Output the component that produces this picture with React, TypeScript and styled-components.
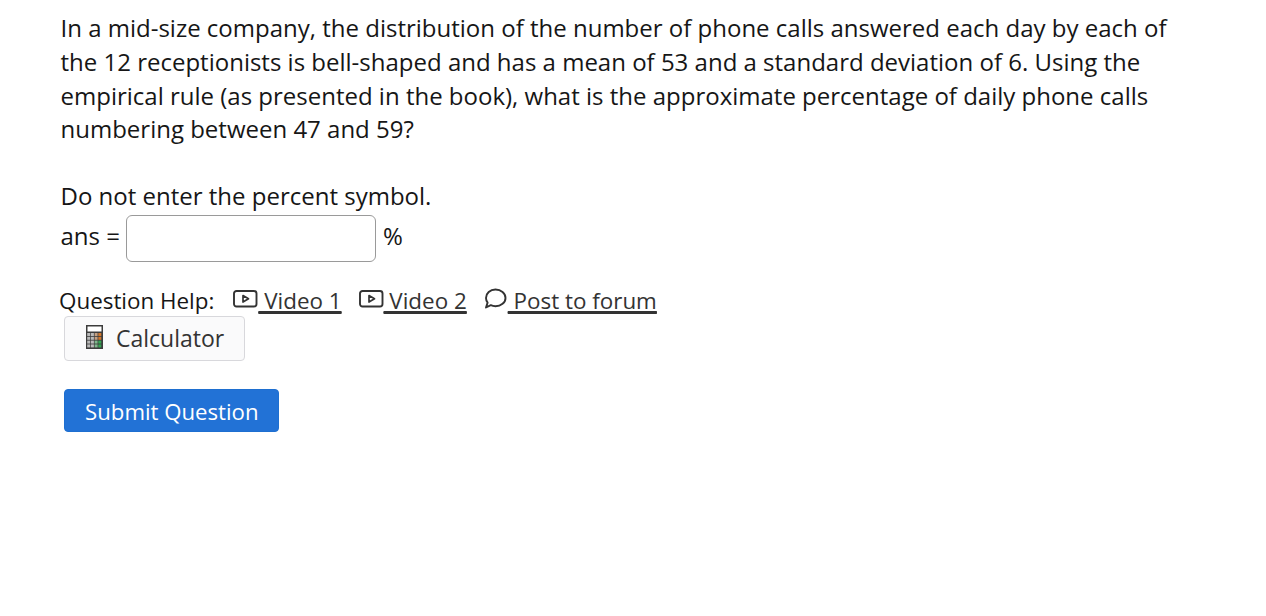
import styled, { createGlobalStyle } from 'styled-components'

const GlobalStyle = createGlobalStyle`
    html, body {
        margin: 0;
        padding: 0;
        background: #fff;
    }
    body {
        font-family: "Open Sans", "Noto Sans", sans-serif;
        color: #161616;
    }
`

const Page = styled.main`
    width: 1266px;
    height: 616px;
    overflow: hidden;
    padding: 11px 0 0 60.5px;
    box-sizing: border-box;
`

const Question = styled.p`
    width: 1125px;
    margin: 0;
    font-size: 24px;
    line-height: 33.8px;
`

const Instruction = styled.p`
    margin: 32.8px 0 0;
    font-size: 24px;
    line-height: 33.9px;
`

const AnswerRow = styled.div`
    display: flex;
    align-items: center;
    height: 47px;
    margin-top: 2px;
    font-size: 24px;
`

const AnswerText = styled.span`
    margin-bottom: 6px;
`

const AnswerInput = styled.input`
    width: 250px;
    height: 47px;
    margin: 0 7px 0 6px;
    padding: 0 8px;
    box-sizing: border-box;
    border: 1px solid #9a9a9a;
    border-radius: 6px;
    background: #fff;
`

const HelpRow = styled.div`
    display: flex;
    align-items: center;
    height: 29px;
    margin: 24px 0 1px -1.5px;
    font-size: 22.4px;
`

const HelpLabel = styled.span`
    margin-right: 19px;
`

const HelpLink = styled.a`
    display: flex;
    align-items: center;
    margin-right: 17px;
    color: #333;
`

const LinkText = styled.span`
    white-space: pre;
    text-decoration: underline;
    text-decoration-thickness: 1.5px;
    text-underline-offset: 3px;
`

const LinkIcon = styled.svg`
    flex: none;
    display: block;
    margin-bottom: 3px;
`

const CalculatorButton = styled.button`
    display: flex;
    align-items: center;
    gap: 13px;
    width: 181px;
    height: 45px;
    margin: 0 0 0 3.5px;
    padding: 0 0 1px 21px;
    box-sizing: border-box;
    border: 1px solid #d8d8dc;
    border-radius: 4px;
    background: #fafafb;
    color: #333;
    font: inherit;
    font-size: 23px;
`

const CalculatorGlyph = styled.svg`
    flex: none;
    display: block;
    margin-bottom: 1px;
`

const SubmitButton = styled.button`
    display: block;
    width: 215px;
    height: 43px;
    margin: 28px 0 0 3.8px;
    padding: 2px 0 0;
    border: 1px solid #1e6fd0;
    border-radius: 4px;
    background: #2272d6;
    color: #fff;
    font: inherit;
    font-size: 22.2px;
    font-weight: 500;
`

function VideoIcon() {
    return (
        <LinkIcon width="25" height="18" viewBox="0 0 25 18" fill="none">
            <rect x="1" y="1" width="22.5" height="15.5" rx="2.5" stroke="#333" strokeWidth="1.9" />
            <path d="M10 5.5 L15.5 8.75 L10 12 Z" stroke="#333" strokeWidth="1.7" strokeLinejoin="round" />
        </LinkIcon>
    )
}

function CommentIcon() {
    return (
        <LinkIcon width="24" height="21" viewBox="0 0 24 21" fill="none">
            <path
                d="M2 19.5 L3.6 14.6 C2.6 13.2 2 11.6 2 9.9 C2 5.2 6 1.5 11.5 1.5 C17 1.5 21.5 5.2 21.5 9.9 C21.5 14.6 17 18.2 11.5 18.2 C9.8 18.2 8.2 17.9 6.8 17.2 Z"
                stroke="#333"
                strokeWidth="1.9"
                strokeLinejoin="round"
            />
        </LinkIcon>
    )
}

function CalculatorIcon() {
    const colors = [
        ['#b9b9b9', '#b9b9b9', '#c4a184', '#d2782e'],
        ['#b9b9b9', '#b9b9b9', '#c4a184', '#d2782e'],
        ['#b9b9b9', '#b9b9b9', '#7fb78c', '#35a452'],
        ['#b9b9b9', '#b9b9b9', '#7fb78c', '#35a452'],
    ]
    return (
        <CalculatorGlyph width="17" height="24" viewBox="0 0 17 24">
            <rect x="0" y="0" width="17" height="24" fill="#3c3c3c" />
            <rect x="1.5" y="1.5" width="14" height="5" fill="#fff" />
            {colors.map((row, r) =>
                row.map((color, c) => (
                    <rect key={`${r}-${c}`} x={1.2 + c * 3.7} y={8 + r * 3.8} width="3" height="3" fill={color} />
                ))
            )}
        </CalculatorGlyph>
    )
}

export default function App() {
    return (
        <>
            <GlobalStyle />
            <Page>
                <Question>
                    In a mid-size company, the distribution of the number of phone calls answered each day by each of the 12 receptionists is bell-shaped and has a mean of 53 and a standard deviation of 6. Using the empirical rule (as presented in the book), what is the approximate percentage of daily phone calls numbering between 47 and 59?
                </Question>
                <Instruction>Do not enter the percent symbol.</Instruction>
                <AnswerRow>
                    <AnswerText>ans =</AnswerText>
                    <AnswerInput type="text" aria-label="ans" />
                    <AnswerText>%</AnswerText>
                </AnswerRow>
                <HelpRow>
                    <HelpLabel>Question Help:</HelpLabel>
                    <HelpLink href="#video1">
                        <VideoIcon />
                        <LinkText> Video 1</LinkText>
                    </HelpLink>
                    <HelpLink href="#video2">
                        <VideoIcon />
                        <LinkText> Video 2</LinkText>
                    </HelpLink>
                    <HelpLink href="#forum">
                        <CommentIcon />
                        <LinkText> Post to forum</LinkText>
                    </HelpLink>
                </HelpRow>
                <CalculatorButton type="button">
                    <CalculatorIcon />
                    Calculator
                </CalculatorButton>
                <SubmitButton type="button">Submit Question</SubmitButton>
            </Page>
        </>
    )
}
